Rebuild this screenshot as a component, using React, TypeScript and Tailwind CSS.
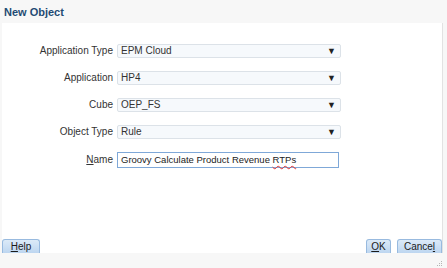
import React from 'react';

type Row = { label: React.ReactNode; value: string };

const rows: Row[] = [
  { label: 'Application Type', value: 'EPM Cloud' },
  { label: 'Application', value: 'HP4' },
  { label: 'Cube', value: 'OEP_FS' },
  { label: 'Object Type', value: 'Rule' },
];

function SelectBox({ value }: { value: string }) {
  return (
    <div className="flex h-[14px] w-[224px] items-center justify-between rounded-[2px] border border-[#dce2e8] bg-[#f6f9fc] pl-[3px] pr-[4px]">
      <span className="leading-none">{value}</span>
      <span className="text-[9px] leading-none text-[#222]">▼</span>
    </div>
  );
}

function DialogButton({ children, className = '' }: { children: React.ReactNode; className?: string }) {
  return (
    <button
      className={`flex h-[14px] items-center justify-center rounded-t-[3px] border border-b-0 border-[#98badf] bg-gradient-to-b from-[#dceaf8] to-[#bdd6f0] pt-[1px] text-[10px] leading-none text-[#1b1b1b] ${className}`}
    >
      {children}
    </button>
  );
}

export default function App() {
  return (
    <div
      className="flex h-[268px] w-[447px] flex-col bg-[#f7f7f7] text-[10px] text-[#333]"
      style={{ fontFamily: '"Liberation Sans", Arial, sans-serif' }}
    >
      <div className="flex h-[23px] items-center px-[4px] pt-[1px]">
        <h1 className="text-[11px] font-bold text-[#1f4b73]">New Object</h1>
      </div>

      <div className="ml-[2px] mr-[4px] flex flex-1 flex-col border-r border-[#e2e2e2] bg-white">
        <div className="grid grid-cols-[111px_224px] items-center gap-x-[4px] gap-y-[13px] pt-[21px]">
          {rows.map((row) => (
            <React.Fragment key={row.value}>
              <div className="text-right leading-none">{row.label}</div>
              <SelectBox value={row.value} />
            </React.Fragment>
          ))}
          <div className="text-right leading-none">
            <span className="underline">N</span>ame
          </div>
          <div className="flex h-[16px] w-[222px] items-center whitespace-pre border border-[#7fa8d8] bg-white pl-[3px] text-[9.5px] leading-none text-[#222]">
            {'Groovy Calculate Product Revenue '}
            <span className="underline decoration-[#e03030] decoration-wavy decoration-1 underline-offset-2">RTPs</span>
          </div>
        </div>

        <div className="mt-auto flex items-end">
          <DialogButton className="w-[38px]">
            <span className="underline">H</span>elp
          </DialogButton>
          <div className="flex-1" />
          <DialogButton className="mr-[6px] w-[25px]">
            <span className="underline">O</span>K
          </DialogButton>
          <DialogButton className="w-[45px]">
            Cance<span className="underline">l</span>
          </DialogButton>
        </div>
      </div>

      <div className="flex h-[15px] items-end justify-end pb-[1px] pr-[4px]">
        <svg width="7" height="7" viewBox="0 0 7 7">
          <rect x="5" y="1" width="1" height="1" fill="#b5b5b5" />
          <rect x="3" y="3" width="1" height="1" fill="#b5b5b5" />
          <rect x="5" y="3" width="1" height="1" fill="#b5b5b5" />
          <rect x="1" y="5" width="1" height="1" fill="#b5b5b5" />
          <rect x="3" y="5" width="1" height="1" fill="#b5b5b5" />
          <rect x="5" y="5" width="1" height="1" fill="#b5b5b5" />
        </svg>
      </div>
    </div>
  );
}
